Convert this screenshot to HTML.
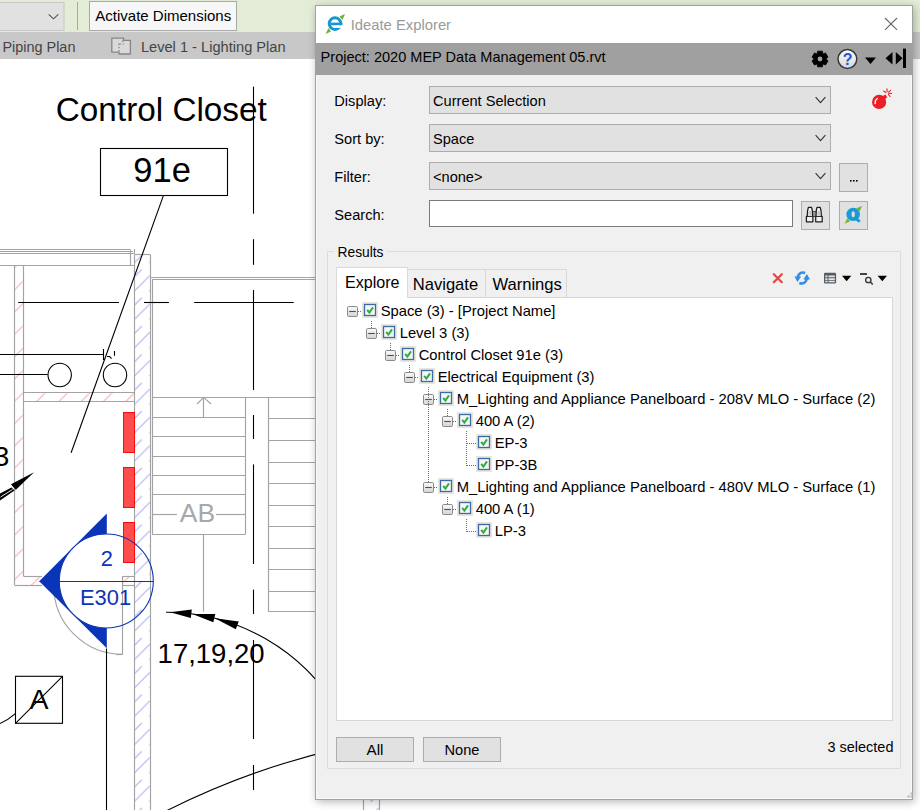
<!DOCTYPE html>
<html><head><meta charset="utf-8"><title>Ideate Explorer</title>
<style>
html,body{margin:0;padding:0;width:920px;height:810px;overflow:hidden;background:#fff}
svg text{white-space:pre}
</style></head><body>
<svg width="920" height="810" viewBox="0 0 920 810" style="position:absolute;left:0;top:0"><rect x="0" y="0" width="920" height="810" fill="#ffffff"/><defs>
<pattern id="hb" patternUnits="userSpaceOnUse" x="134.8" y="20.2" width="15.8" height="28.35">
<line x1="0" y1="15.3" x2="15.3" y2="0" stroke="#a4a4f6" stroke-width="1"/>
<line x1="0" y1="1.15" x2="7" y2="-5.85" stroke="#a4a4f6" stroke-width="1"/>
<line x1="0" y1="29.45" x2="7" y2="22.45" stroke="#a4a4f6" stroke-width="1"/>
<rect x="14.6" y="14.6" width="1.2" height="1.4" fill="#a4a4f6"/>
</pattern>
<pattern id="hp" patternUnits="userSpaceOnUse" x="0" y="14.4" width="22.3" height="22.3">
<line x1="-1" y1="23.3" x2="23.3" y2="-1" stroke="#f6a8a8" stroke-width="1"/>
</pattern>
<mask id="mtri"><rect x="0" y="0" width="920" height="810" fill="#fff"/><circle cx="106.3" cy="581" r="47" fill="#000"/></mask>
<linearGradient id="shL" x1="0" x2="1" y1="0" y2="0"><stop offset="0" stop-color="#000" stop-opacity="0"/><stop offset="1" stop-color="#000" stop-opacity="0.10"/></linearGradient>
<linearGradient id="shR" x1="0" x2="1" y1="0" y2="0"><stop offset="0" stop-color="#000" stop-opacity="0.16"/><stop offset="1" stop-color="#000" stop-opacity="0"/></linearGradient>
<linearGradient id="shB" x1="0" x2="0" y1="0" y2="1"><stop offset="0" stop-color="#000" stop-opacity="0.18"/><stop offset="1" stop-color="#000" stop-opacity="0"/></linearGradient>
</defs><rect x="134.6" y="254.5" width="15.8" height="560" fill="url(#hb)"/><rect x="363.5" y="790" width="16" height="30" fill="url(#hb)"/><rect x="15" y="265.8" width="8.5" height="319.5" fill="url(#hp)"/><rect x="122.7" y="576.2" width="11.9" height="9.2" fill="url(#hp)"/><rect x="23.7" y="392.4" width="110.8" height="9.1" fill="url(#hp)"/><rect x="23.7" y="576.4" width="18.3" height="9" fill="url(#hp)"/><g stroke="#a3a3a3" stroke-width="1.15" fill="none"><line x1="0" y1="249.5" x2="130.5" y2="249.5"/><line x1="0" y1="251.5" x2="133" y2="251.5"/><line x1="0" y1="253.5" x2="134.6" y2="253.5"/><line x1="130.5" y1="249.6" x2="130.5" y2="265.4"/><line x1="134.5" y1="249" x2="134.5" y2="253.6"/><line x1="0" y1="265.5" x2="134.6" y2="265.5"/><line x1="14.5" y1="265.3" x2="14.5" y2="585.3"/><line x1="23.5" y1="265.4" x2="23.5" y2="576.4"/><line x1="23.7" y1="392.5" x2="134.6" y2="392.5"/><line x1="23.7" y1="401.5" x2="134.6" y2="401.5"/><line x1="23.7" y1="576.5" x2="42" y2="576.5"/><line x1="14.8" y1="585.5" x2="42" y2="585.5"/><line x1="134.5" y1="254.5" x2="134.5" y2="810"/><line x1="150.5" y1="254.5" x2="150.5" y2="810"/><line x1="134.6" y1="254.5" x2="150.4" y2="254.5"/><line x1="363.5" y1="799" x2="363.5" y2="810"/><line x1="379.5" y1="799" x2="379.5" y2="810"/><line x1="150.4" y1="277.5" x2="320" y2="277.5"/><line x1="152.2" y1="279.5" x2="320" y2="279.5"/><line x1="152.5" y1="279.2" x2="152.5" y2="397.4"/><line x1="152.2" y1="397.5" x2="320" y2="397.5"/><line x1="152.5" y1="397.4" x2="152.5" y2="534"/><line x1="245.5" y1="397.4" x2="245.5" y2="534"/><line x1="152.2" y1="534.5" x2="245.6" y2="534.5"/><line x1="152.2" y1="417.5" x2="245.6" y2="417.5"/><line x1="152.2" y1="436.5" x2="245.6" y2="436.5"/><line x1="152.2" y1="456.5" x2="245.6" y2="456.5"/><line x1="152.2" y1="475.5" x2="245.6" y2="475.5"/><line x1="152.2" y1="494.5" x2="245.6" y2="494.5"/><line x1="152.2" y1="514.5" x2="177" y2="514.5"/><line x1="216" y1="514.5" x2="245.6" y2="514.5"/><line x1="203.5" y1="397.4" x2="203.5" y2="417"/><line x1="197" y1="404" x2="203.7" y2="397.4"/><line x1="203.7" y1="397.4" x2="211" y2="404"/><line x1="203.5" y1="534" x2="203.5" y2="611.7"/><line x1="268.5" y1="397.4" x2="268.5" y2="611.9"/><line x1="268.4" y1="418.5" x2="320" y2="418.5"/><line x1="268.4" y1="440.5" x2="320" y2="440.5"/><line x1="268.4" y1="462.5" x2="320" y2="462.5"/><line x1="268.4" y1="483.5" x2="320" y2="483.5"/><line x1="268.4" y1="505.5" x2="320" y2="505.5"/><line x1="268.4" y1="526.5" x2="320" y2="526.5"/><line x1="268.4" y1="548.5" x2="320" y2="548.5"/><line x1="268.4" y1="569.5" x2="320" y2="569.5"/><line x1="268.4" y1="591.5" x2="320" y2="591.5"/><line x1="268.4" y1="611.5" x2="320" y2="611.5"/><line x1="122.7" y1="576.5" x2="134.6" y2="576.5"/><line x1="122.5" y1="576.2" x2="122.5" y2="654"/><line x1="116" y1="654.5" x2="122.7" y2="654.5"/><line x1="122.7" y1="585.5" x2="134.6" y2="585.5"/><path d="M53.7,585.4 A69,69 0 0 0 122.7,654.4" fill="none"/></g><rect x="123.5" y="412.5" width="11" height="40.0" fill="#ff4d4d" stroke="#f80c0c" stroke-width="1"/><rect x="123.5" y="467.5" width="11" height="40.0" fill="#ff4d4d" stroke="#f80c0c" stroke-width="1"/><rect x="123.5" y="522.5" width="11" height="40.0" fill="#ff4d4d" stroke="#f80c0c" stroke-width="1"/><g stroke="#000" stroke-width="1.1" fill="none"><line x1="163.4" y1="195.6" x2="71.1" y2="452.8"/><line x1="253.5" y1="86.6" x2="253.5" y2="213.7"/><line x1="253.5" y1="239.2" x2="253.5" y2="264.8"/><line x1="253.5" y1="290" x2="253.5" y2="390"/><line x1="253.5" y1="415" x2="253.5" y2="439"/><line x1="253.5" y1="464.4" x2="253.5" y2="564"/><line x1="253.5" y1="589.6" x2="253.5" y2="614"/><line x1="253.5" y1="640" x2="253.5" y2="739"/><line x1="253.5" y1="765" x2="253.5" y2="790"/><line x1="18.2" y1="302.5" x2="119" y2="302.5"/><line x1="144" y1="302.5" x2="168.9" y2="302.5"/><line x1="194.2" y1="302.5" x2="293.7" y2="302.5"/><line x1="0" y1="354.5" x2="103.7" y2="354.5"/><line x1="103.5" y1="349" x2="103.5" y2="360"/><line x1="0" y1="374.5" x2="47.6" y2="374.5"/><circle cx="59.7" cy="375" r="11.7"/><circle cx="115" cy="375" r="11.7"/><path d="M107,356.5 H109.6 L111.6,358.6 M114.5,351 V355.8"/><line x1="106.5" y1="648.5" x2="106.5" y2="810"/><rect x="15.5" y="676.3" width="47" height="47"/><line x1="15.5" y1="723.3" x2="62.5" y2="676.3"/><path d="M0,723.5 Q8,720 15.4,713.6"/><path d="M166.1,612.2 A199.9,199.9 0 0 1 339.2,712.1"/><path d="M160,814.1 A759.5,759.5 0 0 1 400,737.4"/><rect x="100.5" y="148.5" width="127" height="47"/></g><path d="M34.1,472.3 L11,484.3 L13,486.8 L15.8,489.7 Z" fill="#000"/><path d="M0,493.5 L11.5,487.5 L14.5,490.5 L0,500.5 Z" fill="#000"/><line x1="0.5" y1="497" x2="12.5" y2="489.5" stroke="#fff" stroke-width="0.9"/><path d="M170.0,612.2 L191.8,609.6 L190.8,618.0 Z M192.3,613.9 L215.3,614.0 L213.3,622.2 Z M214.8,618.2 L238.8,621.4 L235.8,629.2 Z" fill="#000"/><g font-family='"Liberation Sans",sans-serif' fill="#000"><text x="55.8" y="121.2" font-size="33.3">Control Closet</text><text x="133.3" y="182.4" font-size="34.5">91e</text><text x="-6" y="466" font-size="27.5">3</text><text x="29.4" y="708.9" font-size="28.5">A</text><text x="157.6" y="662.8" font-size="27.5">17,19,20</text></g><text x="179.8" y="521.5" font-size="26.5" font-family='"Liberation Sans",sans-serif' fill="#a8a8a8">AB</text><path d="M39.2,581.2 L106.8,513.6 L106.8,648.2 Z" fill="#0b35b8" mask="url(#mtri)"/><circle cx="106.3" cy="581" r="47" fill="none" stroke="#0b35b8" stroke-width="1.1"/><line x1="39.5" y1="581.5" x2="153.3" y2="581.5" stroke="#0b35b8" stroke-width="1.1"/><text x="100.7" y="566.3" font-size="21.8" font-family='"Liberation Sans",sans-serif' fill="#0b35b8">2</text><text x="80" y="604.9" font-size="21.9" font-family='"Liberation Sans",sans-serif' fill="#0b35b8">E301</text><rect x="0" y="0" width="920" height="32" fill="#e3ecd7"/><rect x="-1" y="2.5" width="65" height="28" fill="#e1e1e1" stroke="#c6c6c6"/><path d="M48.7,14.3 L53.5,18.8 L58.3,14.3" fill="none" stroke="#555" stroke-width="1.1"/><line x1="77.5" y1="2" x2="77.5" y2="30" stroke="#a9a9a9"/><rect x="89.5" y="1.5" width="147" height="29" fill="#f7f7f7" stroke="#a9a9a9"/><text x="95.3" y="20.6" font-size="15" font-family='"Liberation Sans",sans-serif' fill="#000">Activate Dimensions</text><rect x="0" y="32" width="920" height="27" fill="#c8c8c8"/><text x="2.4" y="52.2" font-size="14.45" font-family='"Liberation Sans",sans-serif' fill="#444">Piping Plan</text><text x="140.9" y="51.7" font-size="14.63" font-family='"Liberation Sans",sans-serif' fill="#444">Level 1 - Lighting Plan</text><path d="M111.8,38.2 H123.6 V40.4 H130.4 V54 H119 V52.2 H111.8 Z" fill="#dadada" stroke="#858585" stroke-width="1.3" stroke-linejoin="round"/><path d="M119,43.5 V52 M119.5,44 H124 M122.8,40.5 V42" fill="none" stroke="#858585" stroke-width="1.2" stroke-dasharray="1.6,1.6"/><defs><filter id="fblur" x="-10%" y="-10%" width="120%" height="120%"><feGaussianBlur stdDeviation="4.5"/></filter><clipPath id="cshad"><rect x="0" y="59" width="920" height="751"/></clipPath></defs><rect x="316.5" y="7" width="598" height="795" fill="#000" opacity="0.28" filter="url(#fblur)"/></svg>
<svg width="920" height="810" viewBox="0 0 920 810" style="position:absolute;left:0;top:0"><defs><linearGradient id="gexp" x1="0" x2="0" y1="0" y2="1"><stop offset="0" stop-color="#fafafa"/><stop offset="1" stop-color="#d4d4d4"/></linearGradient></defs><rect x="315.5" y="5.5" width="597" height="794" fill="#f0f0f0" stroke="#a0a39c"/><rect x="316" y="6" width="596" height="37" fill="#fff"/><rect x="316" y="43" width="596" height="32" fill="#a0a0a0"/><path d="M325.5,34 L328.5,28 L331,31.5 Z M345,14 L339.5,16.5 L342.5,20 Z" fill="#6cb42c"/><circle cx="335" cy="23.6" r="5.8" fill="none" stroke="#1898d2" stroke-width="3"/><rect x="330.6" y="22.6" width="11.8" height="2.7" fill="#1898d2"/><rect x="337" y="25.3" width="6" height="2.6" fill="#fff"/><text x="350.7" y="29.8" font-size="14.8" font-family='"Liberation Sans",sans-serif' fill="#9a9a9a">Ideate Explorer</text><path d="M885,18 L897,29.8 M897,18 L885,29.8" stroke="#666" stroke-width="1.1"/><text x="320.6" y="62" font-size="14.8" textLength="285" lengthAdjust="spacingAndGlyphs" font-family='"Liberation Sans",sans-serif' fill="#000">Project: 2020 MEP Data Management 05.rvt</text><g transform="translate(820,59)"><polygon points="-2.42,-7.83 2.42,-7.83 2.83,-5.18 3.07,-5.04 5.57,-6.02 8.00,-1.82 5.90,-0.14 5.90,0.14 8.00,1.82 5.57,6.02 3.07,5.04 2.83,5.18 2.42,7.83 -2.42,7.83 -2.83,5.18 -3.07,5.04 -5.57,6.02 -8.00,1.82 -5.90,0.14 -5.90,-0.14 -8.00,-1.82 -5.57,-6.02 -3.07,-5.04 -2.83,-5.18" fill="#000" stroke="#000" stroke-width="0.8" stroke-linejoin="round"/><circle r="2.4" fill="#a0a0a0"/></g><defs><linearGradient id="ghelp" x1="0" x2="0" y1="0" y2="1"><stop offset="0" stop-color="#fbfbfb"/><stop offset="1" stop-color="#d8d8dc"/></linearGradient></defs><circle cx="847.4" cy="59" r="9.4" fill="url(#ghelp)" stroke="#3a3a3a" stroke-width="1.5"/><text x="847.6" y="65.3" font-size="16" font-weight="bold" text-anchor="middle" font-family='"Liberation Sans",sans-serif' fill="#2456c8">?</text><path d="M865,57.5 L876,57.5 L870.5,64 Z" fill="#000"/><path d="M892.5,52 L885.5,58.3 L892.5,64.6 Z M895.8,52 L902.6,58.3 L895.8,64.6 Z" fill="#000"/><rect x="903" y="48.6" width="3" height="19.4" fill="#000"/><text x="334.3" y="106" font-size="14.62" font-family='"Liberation Sans",sans-serif' fill="#000">Display:</text><text x="334.3" y="144" font-size="14.62" font-family='"Liberation Sans",sans-serif' fill="#000">Sort by:</text><text x="334.3" y="182" font-size="14.62" font-family='"Liberation Sans",sans-serif' fill="#000">Filter:</text><text x="334.3" y="220" font-size="14.62" font-family='"Liberation Sans",sans-serif' fill="#000">Search:</text><rect x="429.5" y="86.5" width="401" height="27" fill="#e1e1e1" stroke="#adadad"/><text x="433" y="106.0" font-size="14.6" font-family='"Liberation Sans",sans-serif' fill="#000">Current Selection</text><path d="M815.6,97.2 L820.5,102.7 L825.4,97.2" fill="none" stroke="#333" stroke-width="1.1"/><rect x="429.5" y="124.5" width="401" height="27" fill="#e1e1e1" stroke="#adadad"/><text x="433" y="144.0" font-size="14.6" font-family='"Liberation Sans",sans-serif' fill="#000">Space</text><path d="M815.6,135.2 L820.5,140.7 L825.4,135.2" fill="none" stroke="#333" stroke-width="1.1"/><rect x="429.5" y="162.5" width="401" height="27" fill="#e1e1e1" stroke="#adadad"/><text x="433" y="182.0" font-size="14.6" font-family='"Liberation Sans",sans-serif' fill="#000">&lt;none&gt;</text><path d="M815.6,173.2 L820.5,178.7 L825.4,173.2" fill="none" stroke="#333" stroke-width="1.1"/><rect x="429.5" y="200.5" width="363" height="26" fill="#fff" stroke="#7a7a7a"/><rect x="839.5" y="163.5" width="28" height="28" fill="#e1e1e1" stroke="#adadad"/><rect x="801.5" y="201.5" width="28" height="28" fill="#e1e1e1" stroke="#adadad"/><rect x="839.5" y="201.5" width="28" height="28" fill="#e1e1e1" stroke="#adadad"/><rect x="850" y="180" width="1.6" height="1.6" fill="#000"/><rect x="853" y="180" width="1.6" height="1.6" fill="#000"/><rect x="856" y="180" width="1.6" height="1.6" fill="#000"/><rect x="812" y="211.5" width="4.6" height="5" fill="#9a9a9a" stroke="#333" stroke-width="0.8"/><path d="M808.4,207.4 L811.6,207.4 L812.3,210.5 L812.6,216.4 L812.9,216.4 L812.9,221.8 L806.4,221.8 L806.4,216.4 L807.2,216.4 L807.6,210.5 Z M820.2,207.4 L817.0,207.4 L816.3,210.5 L816.0,216.4 L815.7,216.4 L815.7,221.8 L822.2,221.8 L822.2,216.4 L821.4,216.4 L821.0,210.5 Z" fill="#f2f2f2" stroke="#1e1e1e" stroke-width="1.25" stroke-linejoin="round"/><path d="M806.8,216.4 H812.6 M816,216.4 H821.8" stroke="#1e1e1e" stroke-width="1"/><rect x="808.4" y="211" width="2.6" height="4" fill="#c8c8c8"/><rect x="817.6" y="211" width="2.6" height="4" fill="#c8c8c8"/><path d="M844.7,223.7 L847.2,218.2 L850.3,221.3 Z M862,206 L856.3,208.2 L859.6,211.4 Z" fill="#6fb82e"/><path d="M846.3,214.3 A6.85,6.6 0 1 0 860,214.3 A6.85,6.6 0 1 0 846.3,214.3 Z M851.6,214.3 A1.6,3 0 1 0 854.8,214.3 A1.6,3 0 1 0 851.6,214.3 Z" fill="#1a9ad6" fill-rule="evenodd"/><path d="M854.5,217.5 L859.8,221.6" stroke="#1a9ad6" stroke-width="3"/><circle cx="879.1" cy="101.9" r="7.1" fill="#ea2027"/><path d="M882.3,96.2 L885.6,94.6 L887.2,97.6 L884.6,99.2 Z" fill="#ea2027"/><path d="M877.8,98.3 Q874.6,100 875.2,104.2" fill="none" stroke="#fff" stroke-width="1.3"/><path d="M887.16,91.61 L886.93,88.92 M888.53,92.17 L890.59,90.44 M888.89,93.34 L891.58,93.57 M888.33,94.43 L890.06,96.49 M885.91,92.40 L883.58,91.05" stroke="#ea2027" stroke-width="1.1" stroke-linecap="round"/><path d="M334,251.5 L327.5,251.5 L327.5,768.5 L900.5,768.5 L900.5,251.5 L387,251.5" fill="none" stroke="#dcdcdc"/><text x="337.5" y="257" font-size="13.8" font-family='"Liberation Sans",sans-serif' fill="#000">Results</text><rect x="407.5" y="269.5" width="78" height="28" fill="#f0f0f0" stroke="#d9d9d9"/><rect x="485.5" y="269.5" width="81" height="28" fill="#f0f0f0" stroke="#d9d9d9"/><rect x="336.5" y="297.5" width="556" height="423" fill="#fff" stroke="#d6d6d6"/><path d="M336.5,298 L336.5,267.5 L407.5,267.5 L407.5,298" fill="#fff" stroke="#d9d9d9"/><rect x="337" y="296" width="70" height="3" fill="#fff"/><text x="345" y="287.8" font-size="16.1" font-family='"Liberation Sans",sans-serif' fill="#000">Explore</text><text x="412.7" y="289.8" font-size="16.6" font-family='"Liberation Sans",sans-serif' fill="#000">Navigate</text><text x="492.4" y="289.8" font-size="16.6" font-family='"Liberation Sans",sans-serif' fill="#000">Warnings</text><path d="M773.8,274.2 L781.8,282.2 M781.8,274.2 L773.8,282.2" stroke="#e54444" stroke-width="2.2" stroke-linecap="round"/><path d="M805.2,272.9 C801.5,271.6 798.6,273.2 797.6,277.2 M799.3,283.1 C803,284.4 805.9,282.8 806.9,278.8" fill="none" stroke="#2f8fe8" stroke-width="2.6"/><path d="M794.5,276.6 L801.2,276.6 L797.4,281.9 Z M803.3,279.4 L810,279.4 L806.9,274.1 Z" fill="#2f8fe8"/><rect x="824" y="272.7" width="12.1" height="10.7" rx="1.2" fill="#575d66"/><path d="M825.3,275.4 h2.2 v1.9 h-2.2 Z M828.5,275.4 h6.3 v1.9 h-6.3 Z M825.3,278.3 h2.2 v1.9 h-2.2 Z M828.5,278.3 h6.3 v1.9 h-6.3 Z M825.3,281.1 h2.2 v1.2 h-2.2 Z M828.5,281.1 h6.3 v1.2 h-6.3 Z" fill="#e6e6e6"/><path d="M842,275.7 L851.3,275.7 L846.6,281.3 Z M877.6,275.7 L887,275.7 L882.3,281.3 Z" fill="#000"/><rect x="860" y="273" width="7" height="2" fill="#3c4450"/><circle cx="868.3" cy="280" r="2.7" fill="#dcefef" stroke="#333" stroke-width="1.3"/><path d="M870.2,281.9 L872.8,284.5" stroke="#444" stroke-width="1.7"/><rect x="347.5" y="306.5" width="10" height="10" fill="url(#gexp)" stroke="#8a8a8a" rx="1.2"/><line x1="349.2" y1="311.5" x2="355.8" y2="311.5" stroke="#3a4aa0" stroke-width="1.1"/><rect x="362" y="302" width="16" height="16" fill="#e9e7dc"/><rect x="364.5" y="304.5" width="11" height="11" fill="#f6f6f6" stroke="#3d6aa8" stroke-width="1.3"/><path d="M367.2,309.8 L369.4,312.6 L373,307.4" fill="none" stroke="#2eae3a" stroke-width="2"/><text x="380.7" y="315.5" font-size="14.78" font-family='"Liberation Sans",sans-serif' fill="#000">Space (3) - [Project Name]</text><rect x="366.5" y="328.5" width="10" height="10" fill="url(#gexp)" stroke="#8a8a8a" rx="1.2"/><line x1="368.2" y1="333.5" x2="374.8" y2="333.5" stroke="#3a4aa0" stroke-width="1.1"/><rect x="381" y="324" width="16" height="16" fill="#e9e7dc"/><rect x="383.5" y="326.5" width="11" height="11" fill="#f6f6f6" stroke="#3d6aa8" stroke-width="1.3"/><path d="M386.2,331.8 L388.4,334.6 L392,329.4" fill="none" stroke="#2eae3a" stroke-width="2"/><text x="399.7" y="337.5" font-size="14.78" font-family='"Liberation Sans",sans-serif' fill="#000">Level 3 (3)</text><rect x="385.5" y="350.5" width="10" height="10" fill="url(#gexp)" stroke="#8a8a8a" rx="1.2"/><line x1="387.2" y1="355.5" x2="393.8" y2="355.5" stroke="#3a4aa0" stroke-width="1.1"/><rect x="400" y="346" width="16" height="16" fill="#e9e7dc"/><rect x="402.5" y="348.5" width="11" height="11" fill="#f6f6f6" stroke="#3d6aa8" stroke-width="1.3"/><path d="M405.2,353.8 L407.4,356.6 L411,351.4" fill="none" stroke="#2eae3a" stroke-width="2"/><text x="418.7" y="359.5" font-size="14.78" font-family='"Liberation Sans",sans-serif' fill="#000">Control Closet 91e (3)</text><rect x="404.5" y="372.5" width="10" height="10" fill="url(#gexp)" stroke="#8a8a8a" rx="1.2"/><line x1="406.2" y1="377.5" x2="412.8" y2="377.5" stroke="#3a4aa0" stroke-width="1.1"/><rect x="419" y="368" width="16" height="16" fill="#e9e7dc"/><rect x="421.5" y="370.5" width="11" height="11" fill="#f6f6f6" stroke="#3d6aa8" stroke-width="1.3"/><path d="M424.2,375.8 L426.4,378.6 L430,373.4" fill="none" stroke="#2eae3a" stroke-width="2"/><text x="437.7" y="381.5" font-size="14.78" font-family='"Liberation Sans",sans-serif' fill="#000">Electrical Equipment (3)</text><rect x="423.5" y="394.5" width="10" height="10" fill="url(#gexp)" stroke="#8a8a8a" rx="1.2"/><line x1="425.2" y1="399.5" x2="431.8" y2="399.5" stroke="#3a4aa0" stroke-width="1.1"/><rect x="438" y="390" width="16" height="16" fill="#e9e7dc"/><rect x="440.5" y="392.5" width="11" height="11" fill="#f6f6f6" stroke="#3d6aa8" stroke-width="1.3"/><path d="M443.2,397.8 L445.4,400.6 L449,395.4" fill="none" stroke="#2eae3a" stroke-width="2"/><text x="456.7" y="403.5" font-size="14.78" font-family='"Liberation Sans",sans-serif' fill="#000">M_Lighting and Appliance Panelboard - 208V MLO - Surface (2)</text><rect x="442.5" y="416.5" width="10" height="10" fill="url(#gexp)" stroke="#8a8a8a" rx="1.2"/><line x1="444.2" y1="421.5" x2="450.8" y2="421.5" stroke="#3a4aa0" stroke-width="1.1"/><rect x="457" y="412" width="16" height="16" fill="#e9e7dc"/><rect x="459.5" y="414.5" width="11" height="11" fill="#f6f6f6" stroke="#3d6aa8" stroke-width="1.3"/><path d="M462.2,419.8 L464.4,422.6 L468,417.4" fill="none" stroke="#2eae3a" stroke-width="2"/><text x="475.7" y="425.5" font-size="14.78" font-family='"Liberation Sans",sans-serif' fill="#000">400 A (2)</text><rect x="476" y="434" width="16" height="16" fill="#e9e7dc"/><rect x="478.5" y="436.5" width="11" height="11" fill="#f6f6f6" stroke="#3d6aa8" stroke-width="1.3"/><path d="M481.2,441.8 L483.4,444.6 L487,439.4" fill="none" stroke="#2eae3a" stroke-width="2"/><text x="494.7" y="447.5" font-size="14.78" font-family='"Liberation Sans",sans-serif' fill="#000">EP-3</text><rect x="476" y="456" width="16" height="16" fill="#e9e7dc"/><rect x="478.5" y="458.5" width="11" height="11" fill="#f6f6f6" stroke="#3d6aa8" stroke-width="1.3"/><path d="M481.2,463.8 L483.4,466.6 L487,461.4" fill="none" stroke="#2eae3a" stroke-width="2"/><text x="494.7" y="469.5" font-size="14.78" font-family='"Liberation Sans",sans-serif' fill="#000">PP-3B</text><rect x="423.5" y="482.5" width="10" height="10" fill="url(#gexp)" stroke="#8a8a8a" rx="1.2"/><line x1="425.2" y1="487.5" x2="431.8" y2="487.5" stroke="#3a4aa0" stroke-width="1.1"/><rect x="438" y="478" width="16" height="16" fill="#e9e7dc"/><rect x="440.5" y="480.5" width="11" height="11" fill="#f6f6f6" stroke="#3d6aa8" stroke-width="1.3"/><path d="M443.2,485.8 L445.4,488.6 L449,483.4" fill="none" stroke="#2eae3a" stroke-width="2"/><text x="456.7" y="491.5" font-size="14.78" font-family='"Liberation Sans",sans-serif' fill="#000">M_Lighting and Appliance Panelboard - 480V MLO - Surface (1)</text><rect x="442.5" y="504.5" width="10" height="10" fill="url(#gexp)" stroke="#8a8a8a" rx="1.2"/><line x1="444.2" y1="509.5" x2="450.8" y2="509.5" stroke="#3a4aa0" stroke-width="1.1"/><rect x="457" y="500" width="16" height="16" fill="#e9e7dc"/><rect x="459.5" y="502.5" width="11" height="11" fill="#f6f6f6" stroke="#3d6aa8" stroke-width="1.3"/><path d="M462.2,507.8 L464.4,510.6 L468,505.4" fill="none" stroke="#2eae3a" stroke-width="2"/><text x="475.7" y="513.5" font-size="14.78" font-family='"Liberation Sans",sans-serif' fill="#000">400 A (1)</text><rect x="476" y="522" width="16" height="16" fill="#e9e7dc"/><rect x="478.5" y="524.5" width="11" height="11" fill="#f6f6f6" stroke="#3d6aa8" stroke-width="1.3"/><path d="M481.2,529.8 L483.4,532.6 L487,527.4" fill="none" stroke="#2eae3a" stroke-width="2"/><text x="494.7" y="535.5" font-size="14.78" font-family='"Liberation Sans",sans-serif' fill="#000">LP-3</text><path d="M358,311.5 H362 M377,333.5 H381 M396,355.5 H400 M415,377.5 H419 M434,399.5 H438 M453,421.5 H457 M467,443.5 H476 M467,465.5 H476 M434,487.5 H438 M453,509.5 H457 M467,531.5 H476 M371.5,321 V328 M390.5,343 V350 M409.5,365 V372 M428.5,387 V482 M447.5,409 V416 M466.5,431 V466 M447.5,497 V504 M466.5,519 V532" fill="none" stroke="#6e6e6e" stroke-width="1" stroke-dasharray="1,1"/><rect x="336.5" y="737.5" width="77" height="24" fill="#e1e1e1" stroke="#adadad"/><rect x="423.5" y="737.5" width="77" height="24" fill="#e1e1e1" stroke="#adadad"/><text x="366.5" y="755" font-size="15.2" font-family='"Liberation Sans",sans-serif' fill="#000">All</text><text x="444.5" y="755" font-size="14.64" font-family='"Liberation Sans",sans-serif' fill="#000">None</text><text x="827.5" y="752" font-size="14.48" font-family='"Liberation Sans",sans-serif' fill="#000">3 selected</text><path d="M911.5,75 V798.5 H316 M316.5,75 V798" fill="none" stroke="#fafafa" stroke-width="1"/><path d="M907.5,796.5 h2 M910.5,796.5 h2 M910.5,793.5 h2" stroke="#b4b4b4" stroke-width="2"/></svg>
</body></html>
